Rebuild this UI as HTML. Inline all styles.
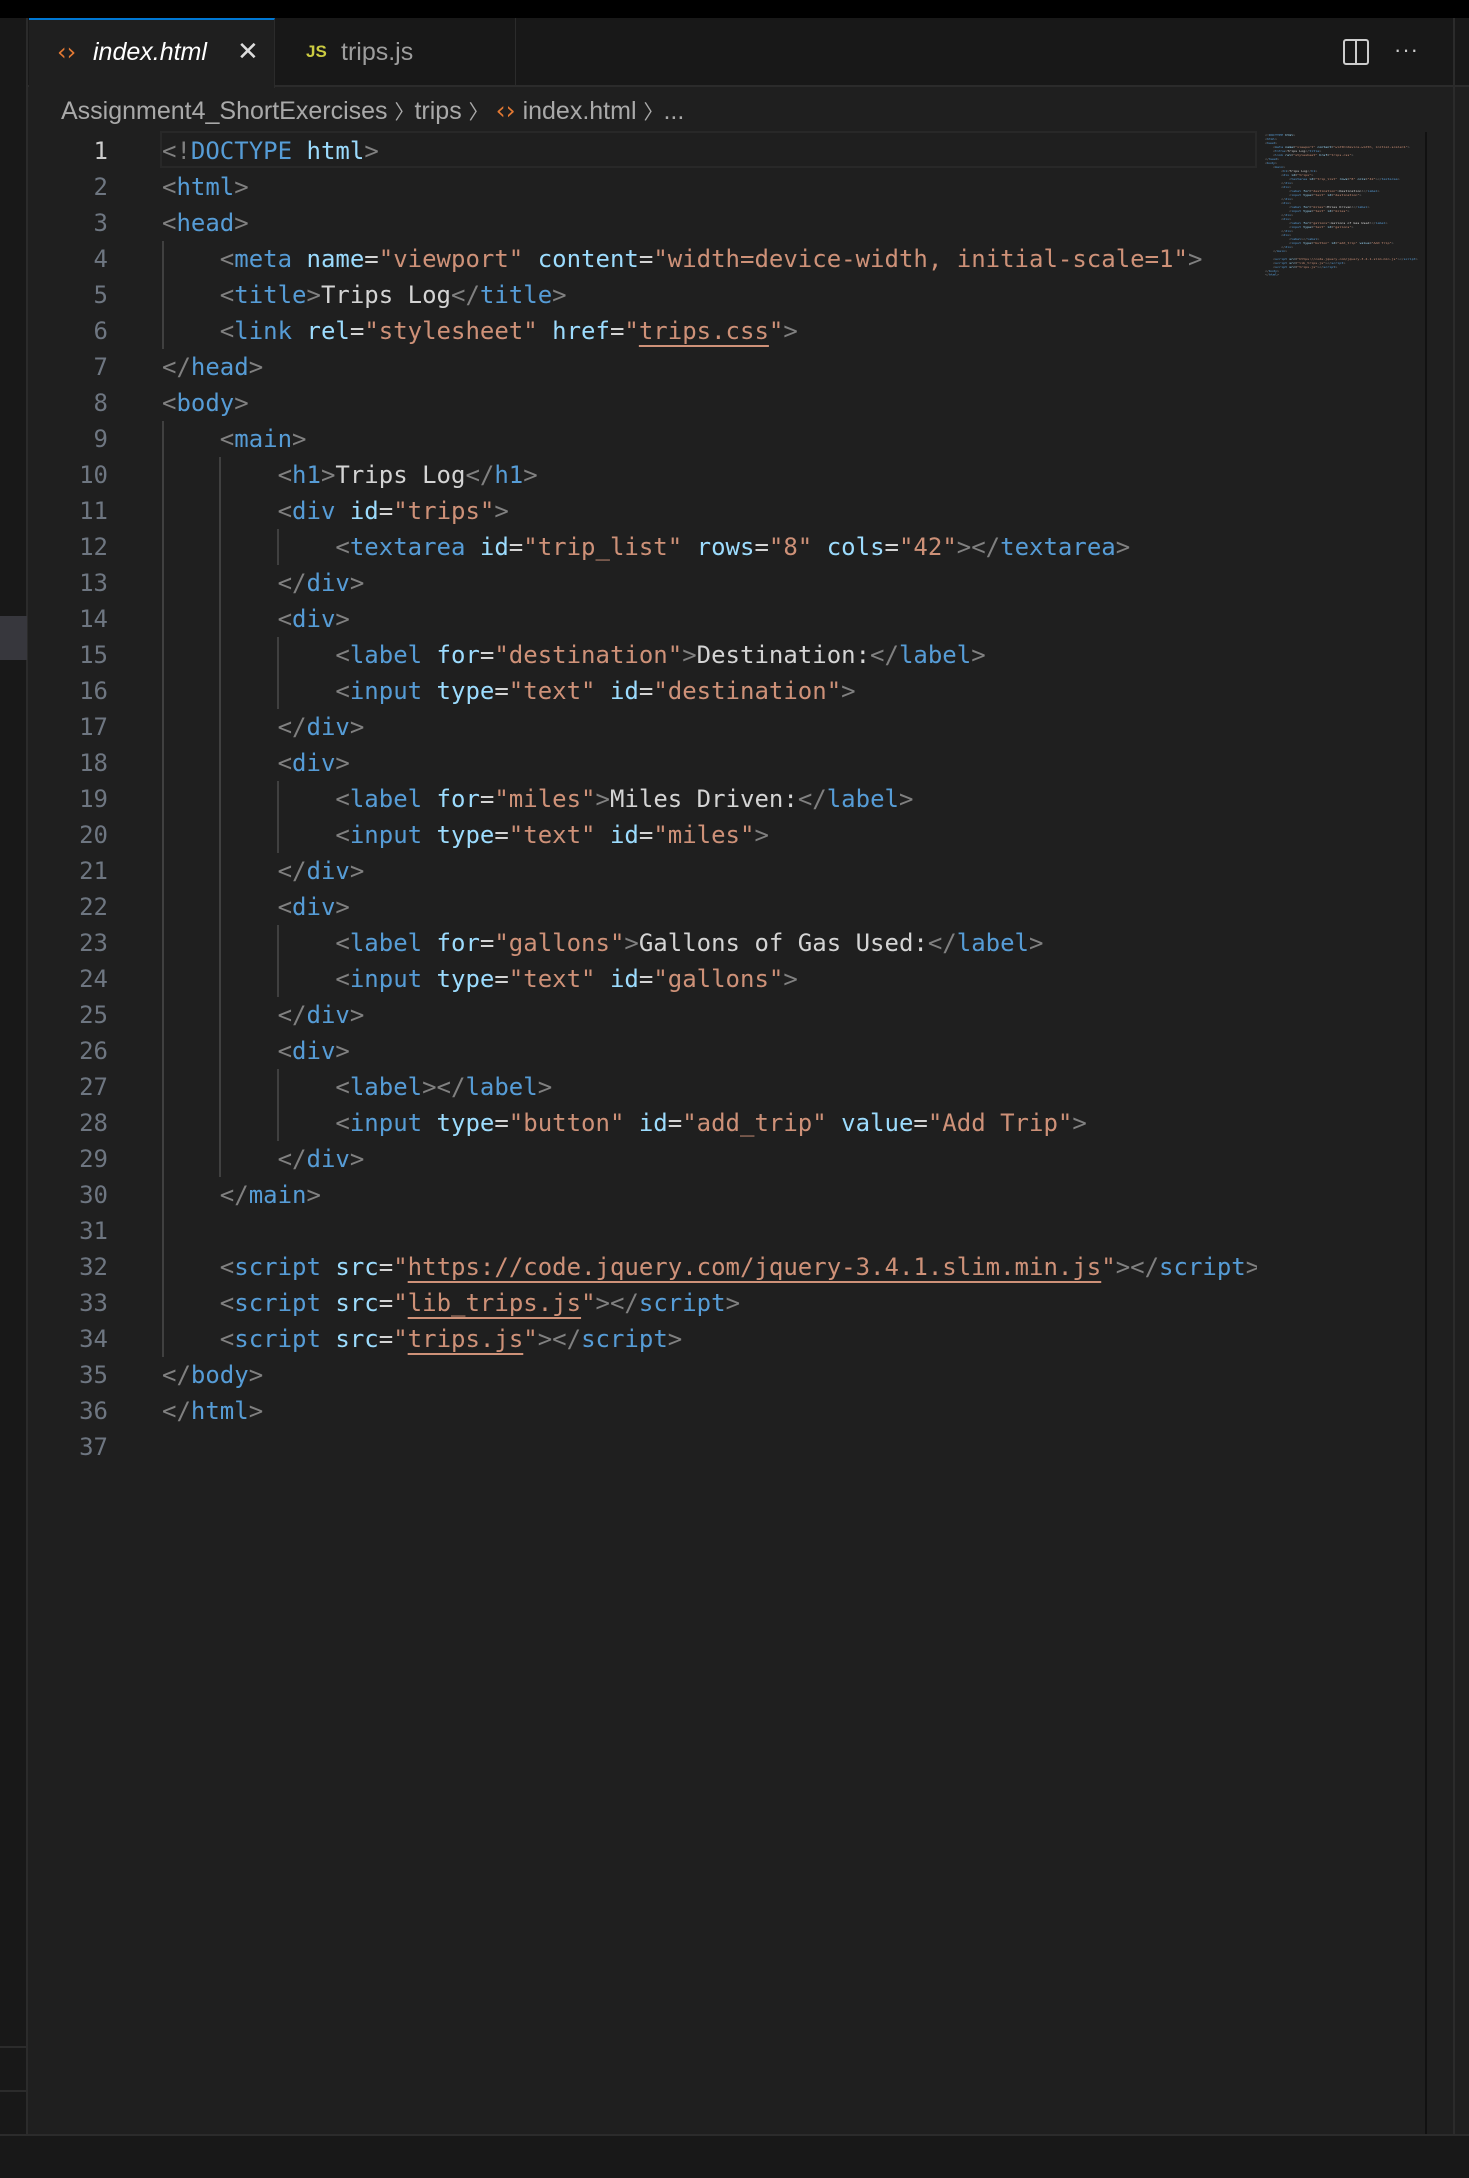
<!DOCTYPE html>
<html><head><meta charset="utf-8"><style>
*{margin:0;padding:0;box-sizing:border-box}
body{width:1469px;height:2178px;background:#1f1f1f;position:relative;overflow:hidden;font-family:"Liberation Sans",sans-serif}
.abs{position:absolute}
.code{position:absolute;left:162px;top:133px;font-family:"DejaVu Sans Mono","Liberation Mono",monospace;font-size:24px;line-height:36px;white-space:pre;color:#d4d4d4}
.b{color:#808080}.t{color:#569cd6}.a{color:#9cdcfe}.s{color:#ce9178}.x{color:#d4d4d4}.u{text-decoration:underline;text-underline-offset:6px;text-decoration-thickness:2px}
.ln{position:absolute;left:40px;width:68px;top:133px;text-align:right;font-family:"DejaVu Sans Mono","Liberation Mono",monospace;font-size:24px;line-height:36px;color:#6e7681}
.g{position:absolute;width:1.5px;background:#404040}
.mini{position:absolute;left:1265px;top:133px;transform-origin:0 0}
</style></head><body>
<div class="abs" style="left:0;top:0;width:1469px;height:18px;background:#000"></div>
<div class="abs" style="left:0;top:18px;width:1469px;height:69px;background:#181818;border-bottom:2px solid #2b2b2b"></div>
<div class="abs" style="left:0;top:18px;width:28px;height:2116px;background:#181818;border-right:2px solid #2b2b2b"></div>
<div class="abs" style="left:0;top:616px;width:27px;height:44px;background:#37373d"></div>
<div class="abs" style="left:0;top:2046px;width:28px;height:2px;background:#2b2b2b"></div>
<div class="abs" style="left:0;top:2090px;width:28px;height:2px;background:#2b2b2b"></div>
<div class="abs" style="left:29px;top:18px;width:246px;height:70px;background:#1f1f1f;border-top:2px solid #0078d4;border-right:1px solid #2b2b2b"></div>
<div class="abs" style="left:515px;top:18px;width:1px;height:69px;background:#2b2b2b"></div>
<div class="abs" style="left:57px;top:38px;font-size:24px;color:#e37933;font-family:'DejaVu Sans',sans-serif">‹›</div>
<div class="abs" style="left:93px;top:38px;font-size:25px;color:#fff;font-style:italic">index.html</div>
<div class="abs" style="left:237px;top:36px;font-size:26px;color:#ddd">✕</div>
<div class="abs" style="left:306px;top:42px;font-size:17px;color:#cbcb41;font-weight:bold">JS</div>
<div class="abs" style="left:341px;top:38px;font-size:25px;color:#9d9d9d">trips.js</div>
<div class="abs" style="left:1343px;top:39px;width:26px;height:26px;border:2px solid #ccc;border-radius:3px"><div style="position:absolute;left:10px;top:0;width:2px;height:22px;background:#ccc"></div></div>
<div class="abs" style="left:1394px;top:37px;font-size:22px;color:#ccc;letter-spacing:1px">···</div>
<div class="abs" style="left:61px;top:96px;font-size:25px;color:#a9a9a9;white-space:pre">Assignment4_ShortExercises <span style="font-size:20px">〉</span>trips <span style="font-size:20px">〉</span> <span style="color:#e37933;font-family:'DejaVu Sans'">‹›</span> index.html <span style="font-size:20px">〉</span>...</div>
<div class="abs" style="left:160px;top:131px;width:1097px;height:37px;border:2px solid #282828"></div>
<div class="abs" style="left:1425px;top:132px;width:2px;height:2002px;background:#111"></div>
<div class="abs" style="left:1453px;top:18px;width:2px;height:2116px;background:#2b2b2b"></div>
<div class="abs" style="left:0;top:2134px;width:1469px;height:44px;background:#181818;border-top:2px solid #2b2b2b"></div>
<div class="g" style="left:162px;top:241px;height:108px"></div>
<div class="g" style="left:162px;top:421px;height:936px"></div>
<div class="g" style="left:219px;top:457px;height:720px"></div>
<div class="g" style="left:277px;top:529px;height:36px"></div>
<div class="g" style="left:277px;top:637px;height:72px"></div>
<div class="g" style="left:277px;top:781px;height:72px"></div>
<div class="g" style="left:277px;top:925px;height:72px"></div>
<div class="g" style="left:277px;top:1069px;height:72px"></div>
<div class="ln"><span style="color:#ccc">1</span><br>2<br>3<br>4<br>5<br>6<br>7<br>8<br>9<br>10<br>11<br>12<br>13<br>14<br>15<br>16<br>17<br>18<br>19<br>20<br>21<br>22<br>23<br>24<br>25<br>26<br>27<br>28<br>29<br>30<br>31<br>32<br>33<br>34<br>35<br>36<br>37</div>
<div class="code"><span class="b">&lt;!</span><span class="t">DOCTYPE</span> <span class="a">html</span><span class="b">&gt;</span>
<span class="b">&lt;</span><span class="t">html</span><span class="b">&gt;</span>
<span class="b">&lt;</span><span class="t">head</span><span class="b">&gt;</span>
    <span class="b">&lt;</span><span class="t">meta</span> <span class="a">name</span>=<span class="s">"viewport"</span> <span class="a">content</span>=<span class="s">"width=device-width, initial-scale=1"</span><span class="b">&gt;</span>
    <span class="b">&lt;</span><span class="t">title</span><span class="b">&gt;</span>Trips Log<span class="b">&lt;/</span><span class="t">title</span><span class="b">&gt;</span>
    <span class="b">&lt;</span><span class="t">link</span> <span class="a">rel</span>=<span class="s">"stylesheet"</span> <span class="a">href</span>=<span class="s">"<span class="u">trips.css</span>"</span><span class="b">&gt;</span>
<span class="b">&lt;/</span><span class="t">head</span><span class="b">&gt;</span>
<span class="b">&lt;</span><span class="t">body</span><span class="b">&gt;</span>
    <span class="b">&lt;</span><span class="t">main</span><span class="b">&gt;</span>
        <span class="b">&lt;</span><span class="t">h1</span><span class="b">&gt;</span>Trips Log<span class="b">&lt;/</span><span class="t">h1</span><span class="b">&gt;</span>
        <span class="b">&lt;</span><span class="t">div</span> <span class="a">id</span>=<span class="s">"trips"</span><span class="b">&gt;</span>
            <span class="b">&lt;</span><span class="t">textarea</span> <span class="a">id</span>=<span class="s">"trip_list"</span> <span class="a">rows</span>=<span class="s">"8"</span> <span class="a">cols</span>=<span class="s">"42"</span><span class="b">&gt;&lt;/</span><span class="t">textarea</span><span class="b">&gt;</span>
        <span class="b">&lt;/</span><span class="t">div</span><span class="b">&gt;</span>
        <span class="b">&lt;</span><span class="t">div</span><span class="b">&gt;</span>
            <span class="b">&lt;</span><span class="t">label</span> <span class="a">for</span>=<span class="s">"destination"</span><span class="b">&gt;</span>Destination:<span class="b">&lt;/</span><span class="t">label</span><span class="b">&gt;</span>
            <span class="b">&lt;</span><span class="t">input</span> <span class="a">type</span>=<span class="s">"text"</span> <span class="a">id</span>=<span class="s">"destination"</span><span class="b">&gt;</span>
        <span class="b">&lt;/</span><span class="t">div</span><span class="b">&gt;</span>
        <span class="b">&lt;</span><span class="t">div</span><span class="b">&gt;</span>
            <span class="b">&lt;</span><span class="t">label</span> <span class="a">for</span>=<span class="s">"miles"</span><span class="b">&gt;</span>Miles Driven:<span class="b">&lt;/</span><span class="t">label</span><span class="b">&gt;</span>
            <span class="b">&lt;</span><span class="t">input</span> <span class="a">type</span>=<span class="s">"text"</span> <span class="a">id</span>=<span class="s">"miles"</span><span class="b">&gt;</span>
        <span class="b">&lt;/</span><span class="t">div</span><span class="b">&gt;</span>
        <span class="b">&lt;</span><span class="t">div</span><span class="b">&gt;</span>
            <span class="b">&lt;</span><span class="t">label</span> <span class="a">for</span>=<span class="s">"gallons"</span><span class="b">&gt;</span>Gallons of Gas Used:<span class="b">&lt;/</span><span class="t">label</span><span class="b">&gt;</span>
            <span class="b">&lt;</span><span class="t">input</span> <span class="a">type</span>=<span class="s">"text"</span> <span class="a">id</span>=<span class="s">"gallons"</span><span class="b">&gt;</span>
        <span class="b">&lt;/</span><span class="t">div</span><span class="b">&gt;</span>
        <span class="b">&lt;</span><span class="t">div</span><span class="b">&gt;</span>
            <span class="b">&lt;</span><span class="t">label</span><span class="b">&gt;&lt;/</span><span class="t">label</span><span class="b">&gt;</span>
            <span class="b">&lt;</span><span class="t">input</span> <span class="a">type</span>=<span class="s">"button"</span> <span class="a">id</span>=<span class="s">"add_trip"</span> <span class="a">value</span>=<span class="s">"Add Trip"</span><span class="b">&gt;</span>
        <span class="b">&lt;/</span><span class="t">div</span><span class="b">&gt;</span>
    <span class="b">&lt;/</span><span class="t">main</span><span class="b">&gt;</span>

    <span class="b">&lt;</span><span class="t">script</span> <span class="a">src</span>=<span class="s">"<span class="u">https://code.jquery.com/jquery-3.4.1.slim.min.js</span>"</span><span class="b">&gt;&lt;/</span><span class="t">script</span><span class="b">&gt;</span>
    <span class="b">&lt;</span><span class="t">script</span> <span class="a">src</span>=<span class="s">"<span class="u">lib_trips.js</span>"</span><span class="b">&gt;&lt;/</span><span class="t">script</span><span class="b">&gt;</span>
    <span class="b">&lt;</span><span class="t">script</span> <span class="a">src</span>=<span class="s">"<span class="u">trips.js</span>"</span><span class="b">&gt;&lt;/</span><span class="t">script</span><span class="b">&gt;</span>
<span class="b">&lt;/</span><span class="t">body</span><span class="b">&gt;</span>
<span class="b">&lt;/</span><span class="t">html</span><span class="b">&gt;</span>
</div>
<div class="abs" style="left:1257px;top:131px;width:168px;height:2003px;background:#1f1f1f;overflow:hidden"></div>
<div class="mini code" style="left:1265px;top:133px;transform:scale(0.139,0.111)"><span class="b">&lt;!</span><span class="t">DOCTYPE</span> <span class="a">html</span><span class="b">&gt;</span>
<span class="b">&lt;</span><span class="t">html</span><span class="b">&gt;</span>
<span class="b">&lt;</span><span class="t">head</span><span class="b">&gt;</span>
    <span class="b">&lt;</span><span class="t">meta</span> <span class="a">name</span>=<span class="s">"viewport"</span> <span class="a">content</span>=<span class="s">"width=device-width, initial-scale=1"</span><span class="b">&gt;</span>
    <span class="b">&lt;</span><span class="t">title</span><span class="b">&gt;</span>Trips Log<span class="b">&lt;/</span><span class="t">title</span><span class="b">&gt;</span>
    <span class="b">&lt;</span><span class="t">link</span> <span class="a">rel</span>=<span class="s">"stylesheet"</span> <span class="a">href</span>=<span class="s">"trips.css"</span><span class="b">&gt;</span>
<span class="b">&lt;/</span><span class="t">head</span><span class="b">&gt;</span>
<span class="b">&lt;</span><span class="t">body</span><span class="b">&gt;</span>
    <span class="b">&lt;</span><span class="t">main</span><span class="b">&gt;</span>
        <span class="b">&lt;</span><span class="t">h1</span><span class="b">&gt;</span>Trips Log<span class="b">&lt;/</span><span class="t">h1</span><span class="b">&gt;</span>
        <span class="b">&lt;</span><span class="t">div</span> <span class="a">id</span>=<span class="s">"trips"</span><span class="b">&gt;</span>
            <span class="b">&lt;</span><span class="t">textarea</span> <span class="a">id</span>=<span class="s">"trip_list"</span> <span class="a">rows</span>=<span class="s">"8"</span> <span class="a">cols</span>=<span class="s">"42"</span><span class="b">&gt;&lt;/</span><span class="t">textarea</span><span class="b">&gt;</span>
        <span class="b">&lt;/</span><span class="t">div</span><span class="b">&gt;</span>
        <span class="b">&lt;</span><span class="t">div</span><span class="b">&gt;</span>
            <span class="b">&lt;</span><span class="t">label</span> <span class="a">for</span>=<span class="s">"destination"</span><span class="b">&gt;</span>Destination:<span class="b">&lt;/</span><span class="t">label</span><span class="b">&gt;</span>
            <span class="b">&lt;</span><span class="t">input</span> <span class="a">type</span>=<span class="s">"text"</span> <span class="a">id</span>=<span class="s">"destination"</span><span class="b">&gt;</span>
        <span class="b">&lt;/</span><span class="t">div</span><span class="b">&gt;</span>
        <span class="b">&lt;</span><span class="t">div</span><span class="b">&gt;</span>
            <span class="b">&lt;</span><span class="t">label</span> <span class="a">for</span>=<span class="s">"miles"</span><span class="b">&gt;</span>Miles Driven:<span class="b">&lt;/</span><span class="t">label</span><span class="b">&gt;</span>
            <span class="b">&lt;</span><span class="t">input</span> <span class="a">type</span>=<span class="s">"text"</span> <span class="a">id</span>=<span class="s">"miles"</span><span class="b">&gt;</span>
        <span class="b">&lt;/</span><span class="t">div</span><span class="b">&gt;</span>
        <span class="b">&lt;</span><span class="t">div</span><span class="b">&gt;</span>
            <span class="b">&lt;</span><span class="t">label</span> <span class="a">for</span>=<span class="s">"gallons"</span><span class="b">&gt;</span>Gallons of Gas Used:<span class="b">&lt;/</span><span class="t">label</span><span class="b">&gt;</span>
            <span class="b">&lt;</span><span class="t">input</span> <span class="a">type</span>=<span class="s">"text"</span> <span class="a">id</span>=<span class="s">"gallons"</span><span class="b">&gt;</span>
        <span class="b">&lt;/</span><span class="t">div</span><span class="b">&gt;</span>
        <span class="b">&lt;</span><span class="t">div</span><span class="b">&gt;</span>
            <span class="b">&lt;</span><span class="t">label</span><span class="b">&gt;&lt;/</span><span class="t">label</span><span class="b">&gt;</span>
            <span class="b">&lt;</span><span class="t">input</span> <span class="a">type</span>=<span class="s">"button"</span> <span class="a">id</span>=<span class="s">"add_trip"</span> <span class="a">value</span>=<span class="s">"Add Trip"</span><span class="b">&gt;</span>
        <span class="b">&lt;/</span><span class="t">div</span><span class="b">&gt;</span>
    <span class="b">&lt;/</span><span class="t">main</span><span class="b">&gt;</span>

    <span class="b">&lt;</span><span class="t">script</span> <span class="a">src</span>=<span class="s">"https://code.jquery.com/jquery-3.4.1.slim.min.js"</span><span class="b">&gt;&lt;/</span><span class="t">script</span><span class="b">&gt;</span>
    <span class="b">&lt;</span><span class="t">script</span> <span class="a">src</span>=<span class="s">"lib_trips.js"</span><span class="b">&gt;&lt;/</span><span class="t">script</span><span class="b">&gt;</span>
    <span class="b">&lt;</span><span class="t">script</span> <span class="a">src</span>=<span class="s">"trips.js"</span><span class="b">&gt;&lt;/</span><span class="t">script</span><span class="b">&gt;</span>
<span class="b">&lt;/</span><span class="t">body</span><span class="b">&gt;</span>
<span class="b">&lt;/</span><span class="t">html</span><span class="b">&gt;</span>
</div>
</body></html>
